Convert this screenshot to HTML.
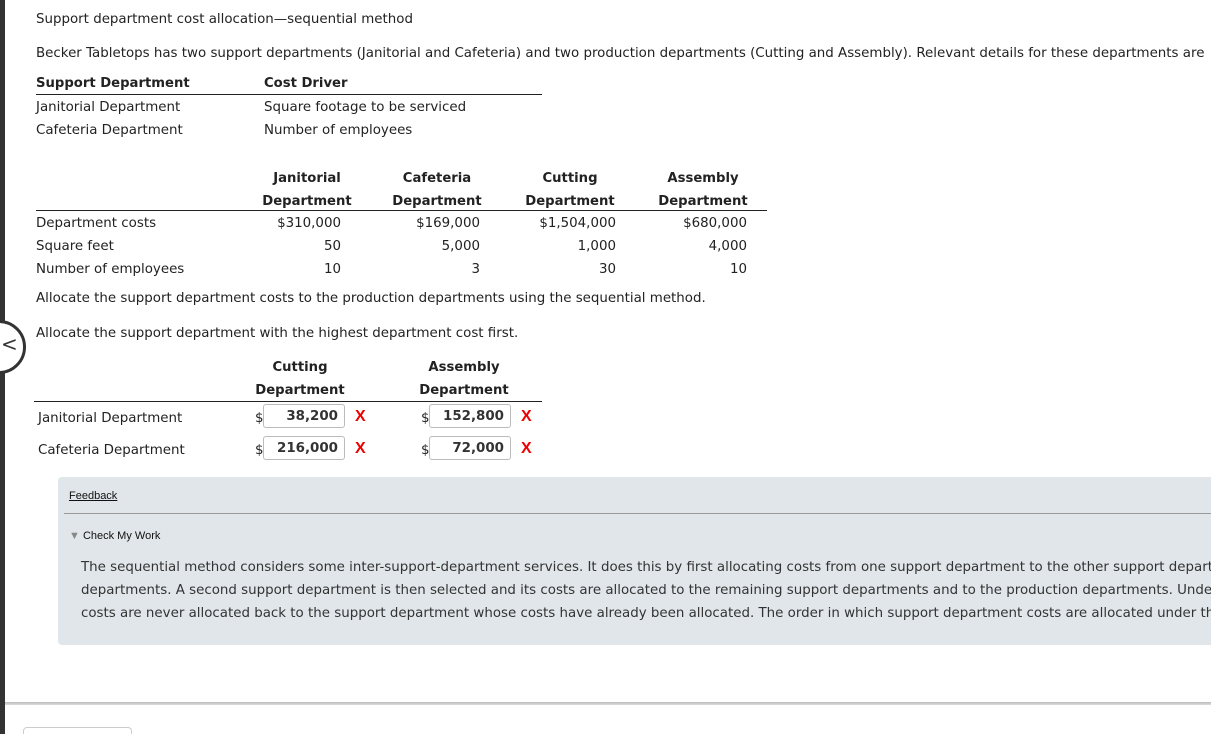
<!DOCTYPE html>
<html><head><meta charset="utf-8"><style>
html,body{margin:0;width:1211px;height:734px;overflow:hidden}
body{background:#fff;position:relative;font-family:"DejaVu Sans","Liberation Sans",sans-serif;font-size:13.4px;color:#222}
.a{position:absolute;white-space:nowrap;line-height:18px}
.b{font-weight:bold;font-size:13.2px}
.r{text-align:right}
.c{text-align:center}
.ln{position:absolute;height:1px;background:#222}
.box{position:absolute;height:24px;border:1px solid #bbb;border-radius:3px;background:#fff;font-weight:bold;text-align:right;line-height:23px;padding-right:6px;box-sizing:border-box;color:#333;font-size:13.4px}
.x{position:absolute;color:#e00;font-weight:bold;font-family:"Liberation Sans",sans-serif;font-size:16px}
</style></head><body>
<div style="position:absolute;left:0;top:0;width:1211px;height:734px;overflow:hidden">
<div style="position:absolute;left:0;top:0;width:5px;height:734px;background:#333"></div>
<div style="position:absolute;left:-28px;top:320px;width:48px;height:48px;border:3px solid #333;border-radius:50%;background:#fff"></div>
<div class="a" style="left:1px;top:335px;font-size:20px;color:#333">&lt;</div>

<div class="a" style="left:36px;top:11px">Support department cost allocation—sequential method</div>
<div class="a" style="left:36px;top:45px">Becker Tabletops has two support departments (Janitorial and Cafeteria) and two production departments (Cutting and Assembly). Relevant details for these departments are</div>
<div class="a b" style="left:36px;top:75px">Support Department</div>
<div class="a b" style="left:264px;top:75px">Cost Driver</div>
<div class="ln" style="left:36px;top:94px;width:506px"></div>
<div class="a" style="left:36px;top:99px">Janitorial Department</div>
<div class="a" style="left:264px;top:99px">Square footage to be serviced</div>
<div class="a" style="left:36px;top:122px">Cafeteria Department</div>
<div class="a" style="left:264px;top:122px">Number of employees</div>

<div class="a b c" style="left:247px;width:120px;top:167px;line-height:23px">Janitorial<br>Department</div>
<div class="a b c" style="left:377px;width:120px;top:167px;line-height:23px">Cafeteria<br>Department</div>
<div class="a b c" style="left:510px;width:120px;top:167px;line-height:23px">Cutting<br>Department</div>
<div class="a b c" style="left:643px;width:120px;top:167px;line-height:23px">Assembly<br>Department</div>
<div class="ln" style="left:36px;top:210px;width:731px"></div>
<div class="a" style="left:36px;top:215px">Department costs</div>
<div class="a r" style="left:241px;width:100px;top:215px">$310,000</div>
<div class="a r" style="left:380px;width:100px;top:215px">$169,000</div>
<div class="a r" style="left:516px;width:100px;top:215px">$1,504,000</div>
<div class="a r" style="left:647px;width:100px;top:215px">$680,000</div>
<div class="a" style="left:36px;top:238px">Square feet</div>
<div class="a r" style="left:241px;width:100px;top:238px">50</div>
<div class="a r" style="left:380px;width:100px;top:238px">5,000</div>
<div class="a r" style="left:516px;width:100px;top:238px">1,000</div>
<div class="a r" style="left:647px;width:100px;top:238px">4,000</div>
<div class="a" style="left:36px;top:261px">Number of employees</div>
<div class="a r" style="left:241px;width:100px;top:261px">10</div>
<div class="a r" style="left:380px;width:100px;top:261px">3</div>
<div class="a r" style="left:516px;width:100px;top:261px">30</div>
<div class="a r" style="left:647px;width:100px;top:261px">10</div>
<div class="a" style="left:36px;top:290px">Allocate the support department costs to the production departments using the sequential method.</div>
<div class="a" style="left:36px;top:325px">Allocate the support department with the highest department cost first.</div>

<div class="a b c" style="left:240px;width:120px;top:356px;line-height:23px">Cutting<br>Department</div>
<div class="a b c" style="left:404px;width:120px;top:356px;line-height:23px">Assembly<br>Department</div>
<div class="ln" style="left:34px;top:401px;width:508px"></div>
<div class="a" style="left:38px;top:410px">Janitorial Department</div>
<div class="a" style="left:38px;top:442px">Cafeteria Department</div>
<div class="a" style="left:255px;top:410px">$</div>
<div class="box" style="left:263px;top:404px;width:82px">38,200</div>
<div class="x" style="left:355px;top:408px">X</div>
<div class="a" style="left:421px;top:410px">$</div>
<div class="box" style="left:429px;top:404px;width:82px">152,800</div>
<div class="x" style="left:521px;top:408px">X</div>
<div class="a" style="left:255px;top:442px">$</div>
<div class="box" style="left:263px;top:436px;width:82px">216,000</div>
<div class="x" style="left:355px;top:440px">X</div>
<div class="a" style="left:421px;top:442px">$</div>
<div class="box" style="left:429px;top:436px;width:82px">72,000</div>
<div class="x" style="left:521px;top:440px">X</div>

<div style="position:absolute;left:58px;top:477px;width:1160px;height:168px;background:#e0e6e9;border-radius:4px"></div>
<div class="a" style="left:69px;top:487px;font-family:'Liberation Sans',sans-serif;font-size:11px;text-decoration:underline;color:#111">Feedback</div>
<div style="position:absolute;left:64px;top:513px;width:1150px;height:1px;background:#999"></div>
<div class="a" style="left:69px;top:527px;font-family:'Liberation Sans',sans-serif;font-size:11px;color:#111"><span style="color:#888">▼</span> Check My Work</div>
<div class="a" style="left:81px;top:556px;line-height:23px;color:#333">The sequential method considers some inter-support-department services. It does this by first allocating costs from one support department to the other support departments and to the production<br>departments. A second support department is then selected and its costs are allocated to the remaining support departments and to the production departments. Under the sequential method,<br>costs are never allocated back to the support department whose costs have already been allocated. The order in which support department costs are allocated under the sequential method</div>

<div style="position:absolute;left:5px;top:702px;width:1206px;height:3px;background:linear-gradient(#bbb,#ddd)"></div>
<div style="position:absolute;left:23px;top:727px;width:107px;height:20px;border:1px solid #ccc;border-radius:4px"></div>
</div>
</body></html>
